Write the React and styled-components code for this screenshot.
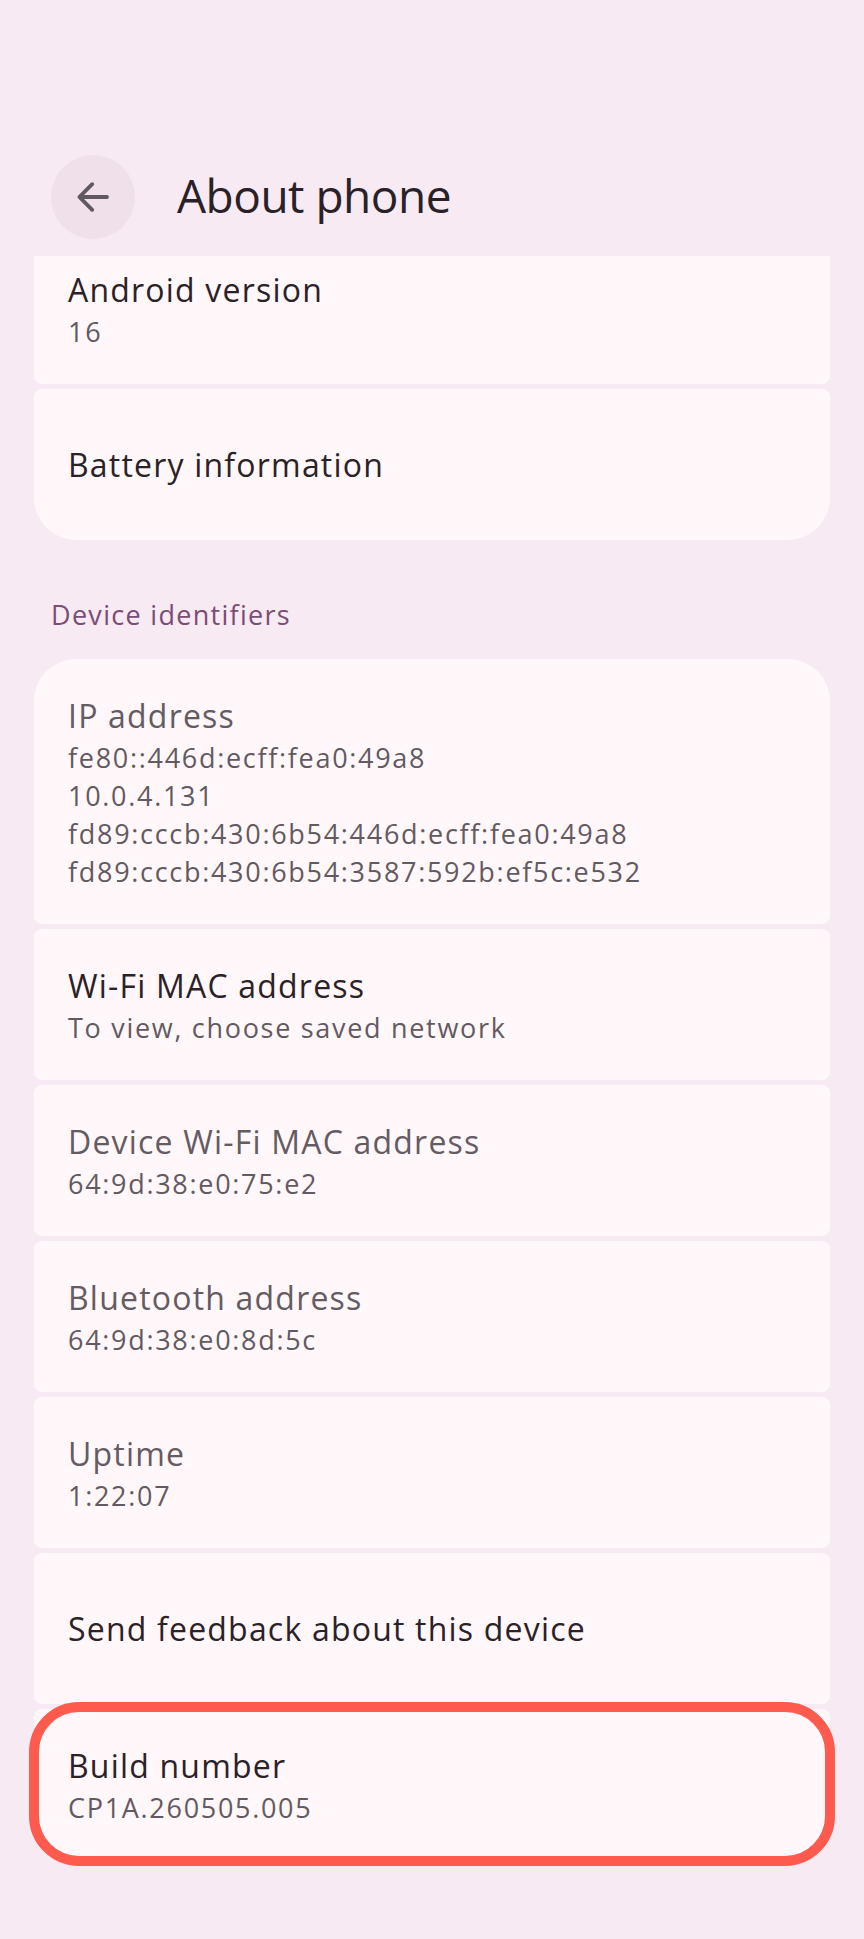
import React from 'react'
import styled, { createGlobalStyle } from 'styled-components'

const GlobalStyle = createGlobalStyle`
    html, body {
        margin: 0;
        padding: 0;
        background: #F7EAF2;
    }
    * {
        box-sizing: border-box;
    }
`

const groups = [
    {
        clipped: true,
        rows: [
            { title: 'Android version', lines: ['16'] },
            { title: 'Battery information' },
        ],
    },
    {
        header: 'Device identifiers',
        rows: [
            {
                title: 'IP address',
                muted: true,
                lines: [
                    'fe80::446d:ecff:fea0:49a8',
                    '10.0.4.131',
                    'fd89:cccb:430:6b54:446d:ecff:fea0:49a8',
                    'fd89:cccb:430:6b54:3587:592b:ef5c:e532',
                ],
            },
            { title: 'Wi-Fi MAC address', lines: ['To view, choose saved network'] },
            { title: 'Device Wi-Fi MAC address', muted: true, lines: ['64:9d:38:e0:75:e2'] },
            { title: 'Bluetooth address', muted: true, lines: ['64:9d:38:e0:8d:5c'] },
            { title: 'Uptime', muted: true, lines: ['1:22:07'] },
            { title: 'Send feedback about this device' },
            { title: 'Build number', lines: ['CP1A.260505.005'], highlight: true },
        ],
    },
]

function BackArrow() {
    return (
        <svg width="48" height="48" viewBox="0 0 24 24" fill="none">
            <path
                d="M19 12H5.5M11.6 5.6L5.2 12l6.4 6.4"
                stroke="#5F5762"
                strokeWidth="1.9"
                strokeLinecap="round"
                strokeLinejoin="round"
            />
        </svg>
    )
}

export default function App() {
    return (
        <Screen>
            <GlobalStyle />
            <TopBar>
                <BackButton aria-label="Back">
                    <BackArrow />
                </BackButton>
                <PageTitle>About phone</PageTitle>
            </TopBar>
            <Content>
                {groups.map((group, gi) => (
                    <Section key={gi}>
                        {group.header && <SectionHeader>{group.header}</SectionHeader>}
                        <Group $clipped={group.clipped}>
                            {group.rows.map((row, ri) => (
                                <Card
                                    key={row.title}
                                    $first={ri === 0 && !group.clipped}
                                    $last={ri === group.rows.length - 1}
                                    $scrolled={ri === 0 && group.clipped}
                                    $highlight={row.highlight}
                                >
                                    <RowTitle $muted={row.muted}>{row.title}</RowTitle>
                                    {row.lines && row.lines.map((line) => (
                                        <RowSummary key={line}>{line}</RowSummary>
                                    ))}
                                </Card>
                            ))}
                        </Group>
                    </Section>
                ))}
            </Content>
        </Screen>
    )
}

const Screen = styled.div`
    width: 864px;
    min-height: 1939px;
    background: #F7EAF2;
    font-family: "Open Sans", "Noto Sans", sans-serif;
    overflow: hidden;
`

const TopBar = styled.header`
    display: flex;
    align-items: center;
    padding: 155px 0 0 51px;
    height: 239px;
`

const BackButton = styled.button`
    width: 84px;
    height: 84px;
    border: none;
    border-radius: 50%;
    background: #F0E0E9;
    display: flex;
    align-items: center;
    justify-content: center;
    padding: 0;
    flex-shrink: 0;
`

const PageTitle = styled.h1`
    margin: 0 0 0 42px;
    padding-bottom: 4px;
    font-size: 46px;
    line-height: 56px;
    font-weight: 400;
    letter-spacing: -0.5px;
    color: #2A2128;
`

const Content = styled.main`
    margin: 17px 34px 0;
`

const Section = styled.section`
    display: flex;
    flex-direction: column;
`

const SectionHeader = styled.h2`
    margin: 57px 0 26px 17px;
    font-size: 27px;
    line-height: 36px;
    font-weight: 500;
    letter-spacing: 1.3px;
    color: #7B4D75;
`

const Group = styled.div`
    display: flex;
    flex-direction: column;
    gap: 5px;
    overflow: ${(p) => (p.$clipped ? 'hidden' : 'visible')};
`

const Card = styled.div`
    position: relative;
    min-height: 151px;
    padding: 33px 34px;
    display: flex;
    flex-direction: column;
    justify-content: center;
    background: #FFF7FA;
    border-radius: ${(p) => (p.$first ? '42px' : '8px')} ${(p) => (p.$first ? '42px' : '8px')}
        ${(p) => (p.$last ? '42px' : '8px')} ${(p) => (p.$last ? '42px' : '8px')};
    margin-top: ${(p) => (p.$scrolled ? '-23px' : '0')};

    &::after {
        content: '';
        display: ${(p) => (p.$highlight ? 'block' : 'none')};
        position: absolute;
        top: -7px;
        bottom: -6px;
        left: -5px;
        right: -5px;
        border: 10.5px solid #FF5A4E;
        border-radius: 50px;
        pointer-events: none;
    }
`

const RowTitle = styled.div`
    font-size: 32px;
    line-height: 47px;
    letter-spacing: 1.2px;
    color: ${(p) => (p.$muted ? '#655B63' : '#2B2228')};
`

const RowSummary = styled.div`
    font-size: 27px;
    line-height: 38px;
    letter-spacing: 1.7px;
    color: #635A61;
`
